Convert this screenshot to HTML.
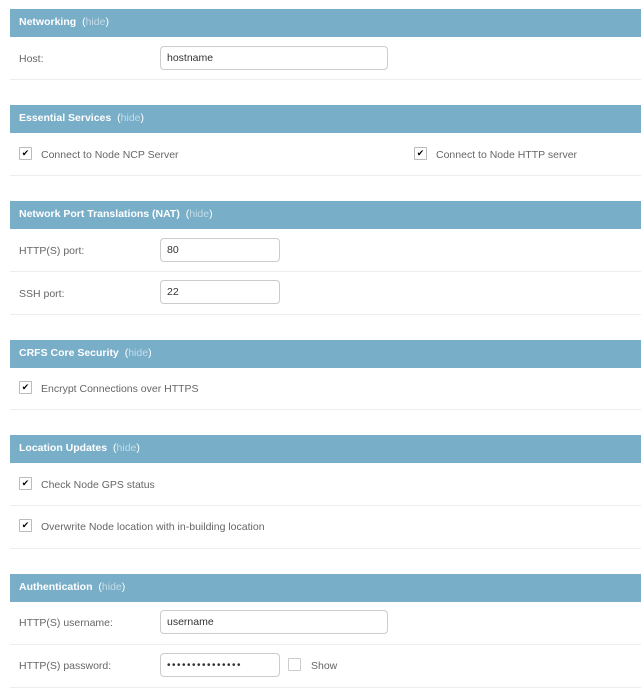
<!DOCTYPE html>
<html><head><meta charset="utf-8"><style>
body{margin:0;width:641px;height:700px;background:#fff;font-family:"Liberation Sans",Arial,sans-serif;font-size:10.5px;color:#666;position:relative;overflow:hidden}
.h{position:absolute;left:10px;right:0;height:28px;background:#79aec8;color:#fff;font-weight:bold;font-size:10.5px;line-height:27px;padding-left:9px;box-sizing:border-box}
.h span{font-weight:normal;color:#c4dce8;margin-left:3px}
.h span b{font-weight:normal;color:#fff}
.r{position:absolute;left:10px;right:0;border-bottom:1px solid #eee;box-sizing:border-box}
.l{position:absolute;left:9px}
.i{position:absolute;left:150px;height:24px;border:1px solid #ccc;border-radius:4px;box-sizing:border-box;color:#333;padding-left:6px;line-height:23px;font-size:10.5px}
.c{position:absolute;width:13px;height:13px;border:1px solid #bbb;box-sizing:border-box;font-size:9px;line-height:11px;text-align:center;color:#000;border-radius:1px}
</style></head><body>
<div class="h" style="top:9px">Networking <span><b>(</b>hide<b>)</b></span></div>
<div class="r" style="top:37px;height:43px"><div class="l" style="top:16px">Host:</div><div class="i" style="top:9px;width:228px">hostname</div></div>

<div class="h" style="top:105px">Essential Services <span><b>(</b>hide<b>)</b></span></div>
<div class="r" style="top:132px;height:44px"><div class="c" style="left:9px;top:15px">✔</div><div class="l" style="left:31px;top:17px">Connect to Node NCP Server</div><div class="c" style="left:404px;top:15px">✔</div><div class="l" style="left:426px;top:17px">Connect to Node HTTP server</div></div>

<div class="h" style="top:201px">Network Port Translations (NAT) <span><b>(</b>hide<b>)</b></span></div>
<div class="r" style="top:228px;height:44px"><div class="l" style="top:17px">HTTP(S) port:</div><div class="i" style="top:10px;width:120px">80</div></div>
<div class="r" style="top:271px;height:44px"><div class="l" style="top:17px">SSH port:</div><div class="i" style="top:9px;width:120px">22</div></div>

<div class="h" style="top:340px">CRFS Core Security <span><b>(</b>hide<b>)</b></span></div>
<div class="r" style="top:367px;height:43px"><div class="c" style="left:9px;top:14px">✔</div><div class="l" style="left:31px;top:16px">Encrypt Connections over HTTPS</div></div>

<div class="h" style="top:435px">Location Updates <span><b>(</b>hide<b>)</b></span></div>
<div class="r" style="top:463px;height:43px"><div class="c" style="left:9px;top:14px">✔</div><div class="l" style="left:31px;top:16px">Check Node GPS status</div></div>
<div class="r" style="top:505px;height:44px"><div class="c" style="left:9px;top:14px">✔</div><div class="l" style="left:31px;top:16px">Overwrite Node location with in-building location</div></div>

<div class="h" style="top:574px">Authentication <span><b>(</b>hide<b>)</b></span></div>
<div class="r" style="top:601px;height:44px"><div class="l" style="top:16px">HTTP(S) username:</div><div class="i" style="top:9px;width:228px">username</div></div>
<div class="r" style="top:644px;height:44px"><div class="l" style="top:16px">HTTP(S) password:</div><div class="i" style="top:9px;width:120px;font-size:10px;letter-spacing:1.5px">•••••••••••••••</div><div class="c" style="left:278px;top:14px;border-color:#ccc"></div><div class="l" style="left:301px;top:16px">Show</div></div>
</body></html>
